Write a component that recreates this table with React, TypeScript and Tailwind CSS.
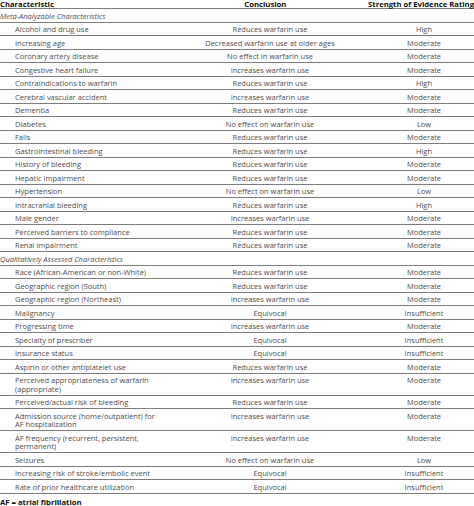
import React from "react";

type Row = { c: string[]; k: string; s: string };

const meta: Row[] = [
  { c: ["Alcohol and drug use"], k: "Reduces warfarin use", s: "High" },
  { c: ["Increasing age"], k: "Decreased warfarin use at older ages", s: "Moderate" },
  { c: ["Coronary artery disease"], k: "No effect in warfarin use", s: "Moderate" },
  { c: ["Congestive heart failure"], k: "Increases warfarin use", s: "Moderate" },
  { c: ["Contraindications to warfarin"], k: "Reduces warfarin use", s: "High" },
  { c: ["Cerebral vascular accident"], k: "Increases warfarin use", s: "Moderate" },
  { c: ["Dementia"], k: "Reduces warfarin use", s: "Moderate" },
  { c: ["Diabetes"], k: "No effect on warfarin use", s: "Low" },
  { c: ["Falls"], k: "Reduces warfarin use", s: "Moderate" },
  { c: ["Gastrointestinal bleeding"], k: "Reduces warfarin use", s: "High" },
  { c: ["History of bleeding"], k: "Reduces warfarin use", s: "Moderate" },
  { c: ["Hepatic impairment"], k: "Reduces warfarin use", s: "Moderate" },
  { c: ["Hypertension"], k: "No effect on warfarin use", s: "Low" },
  { c: ["Intracranial bleeding"], k: "Reduces warfarin use", s: "High" },
  { c: ["Male gender"], k: "Increases warfarin use", s: "Moderate" },
  { c: ["Perceived barriers to compliance"], k: "Reduces warfarin use", s: "Moderate" },
  { c: ["Renal impairment"], k: "Reduces warfarin use", s: "Moderate" },
];

const qual: Row[] = [
  { c: ["Race (African-American or non-White)"], k: "Reduces warfarin use", s: "Moderate" },
  { c: ["Geographic region (South)"], k: "Reduces warfarin use", s: "Moderate" },
  { c: ["Geographic region (Northeast)"], k: "Increases warfarin use", s: "Moderate" },
  { c: ["Malignancy"], k: "Equivocal", s: "Insufficient" },
  { c: ["Progressing time"], k: "Increases warfarin use", s: "Moderate" },
  { c: ["Specialty of prescriber"], k: "Equivocal", s: "Insufficient" },
  { c: ["Insurance status"], k: "Equivocal", s: "Insufficient" },
  { c: ["Aspirin or other antiplatelet use"], k: "Reduces warfarin use", s: "Moderate" },
  { c: ["Perceived appropriateness of warfarin", "(appropriate)"], k: "Increases warfarin use", s: "Moderate" },
  { c: ["Perceived/actual risk of bleeding"], k: "Reduces warfarin use", s: "Moderate" },
  { c: ["Admission source (home/outpatient) for", "AF hospitalization"], k: "Increases warfarin use", s: "Moderate" },
  { c: ["AF frequency (recurrent, persistent,", "permanent)"], k: "Increases warfarin use", s: "Moderate" },
  { c: ["Seizures"], k: "No effect on warfarin use", s: "Low" },
  { c: ["Increasing risk of stroke/embolic event"], k: "Equivocal", s: "Insufficient" },
  { c: ["Rate of prior healthcare utilization"], k: "Equivocal", s: "Insufficient" },
];

function DataRow({ r }: { r: Row }) {
  return (
    <div className="flex items-start border-b border-[#7d7d7d] pt-[2.5px] pb-[1.5px] leading-[8.5px] whitespace-nowrap">
      <div className="w-[195px] pl-[15px] flex flex-col">
        {r.c.map((l, i) => (
          <span key={i}>{l}</span>
        ))}
      </div>
      <div className="w-[150px] text-center">{r.k}</div>
      <div className="flex-1 pl-[29px]">
        <div className="w-[100px] text-center">{r.s}</div>
      </div>
    </div>
  );
}

function Section({ title }: { title: string }) {
  return (
    <div className="border-b border-[#7d7d7d] pt-[2.5px] pb-[1.5px] leading-[8.5px] italic whitespace-nowrap">
      {title}
    </div>
  );
}

export default function App() {
  return (
    <div
      className="w-[474px] h-[506px] overflow-hidden bg-white text-[7.5px] text-[#4d4d4d]"
      style={{ fontFamily: '"Open Sans", "Noto Sans", sans-serif' }}
    >
      <div className="flex items-start border-b border-[#7d7d7d] leading-[8px] font-bold text-[7.7px] text-[#111] whitespace-nowrap">
        <div className="w-[195px]">Characteristic</div>
        <div className="w-[150px] text-center">Conclusion</div>
        <div className="flex-1 pl-[29px]">Strength of Evidence Rating</div>
      </div>
      <Section title="Meta-Analyzable Characteristics" />
      {meta.map((r, i) => (
        <DataRow key={"m" + i} r={r} />
      ))}
      <Section title="Qualitatively Assessed Characteristics" />
      {qual.map((r, i) => (
        <DataRow key={"q" + i} r={r} />
      ))}
      <div className="pt-[4px] leading-[8.5px] font-bold text-[7.7px] text-[#111] whitespace-nowrap">
        AF = atrial fibrillation
      </div>
    </div>
  );
}
